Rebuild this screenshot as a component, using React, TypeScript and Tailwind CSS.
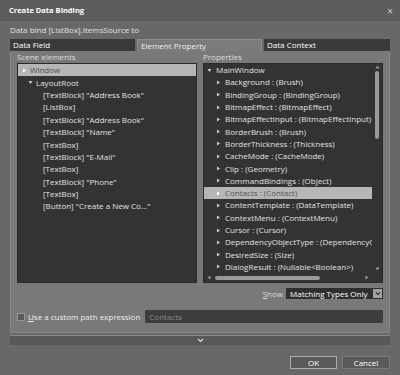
import React from 'react';

const sceneItems = [
  '[TextBlock] "Address Book"',
  '[ListBox]',
  '[TextBlock] "Address Book"',
  '[TextBlock] "Name"',
  '[TextBox]',
  '[TextBlock] "E-Mail"',
  '[TextBox]',
  '[TextBlock] "Phone"',
  '[TextBox]',
  '[Button] "Create a New Co..."',
];

const properties = [
  'Background : (Brush)',
  'BindingGroup : (BindingGroup)',
  'BitmapEffect : (BitmapEffect)',
  'BitmapEffectInput : (BitmapEffectInput)',
  'BorderBrush : (Brush)',
  'BorderThickness : (Thickness)',
  'CacheMode : (CacheMode)',
  'Clip : (Geometry)',
  'CommandBindings : (Object)',
  'Contacts : (Contact)',
  'ContentTemplate : (DataTemplate)',
  'ContextMenu : (ContextMenu)',
  'Cursor : (Cursor)',
  'DependencyObjectType : (DependencyObject',
  'DesiredSize : (Size)',
  'DialogResult : (Nullable<Boolean>)',
];

function Arrow({ down = false, className = '' }: { down?: boolean; className?: string }) {
  return (
    <svg width="5" height="5" viewBox="0 0 5 5" className={`shrink-0 ${className}`}>
      {down ? <path d="M0.5 1 L4.5 1 L2.5 4 Z" fill="currentColor" /> : <path d="M1 0.5 L4 2.5 L1 4.5 Z" fill="currentColor" />}
    </svg>
  );
}

export default function App() {
  return (
    <div
      className="w-[400px] h-[375px] bg-[#686868] text-[8px] text-[#e2e2e2] flex flex-col overflow-hidden"
      style={{ fontFamily: '"Open Sans", "Noto Sans", sans-serif' }}
    >
      {/* title bar */}
      <div className="h-[21px] bg-[#5d5d5d] flex items-center justify-between pl-[9px] pr-[7px]">
        <span className="font-bold text-[7.5px] text-white">Create Data Binding</span>
        <span className="text-[10px] text-[#d0d0d0] leading-none">×</span>
      </div>

      <div className="px-[10px] flex flex-col">
        <div className="h-[14px] mt-[2px] flex items-center">Data bind [ListBox].ItemsSource to</div>

        {/* tabs */}
        <div className="mt-[2px] h-[12px] flex gap-[2px]">
          <div className="w-[125px] bg-[#3a3a3a] flex items-center pl-[3px] text-white">Data Field</div>
          <div className="w-[125px] bg-[#7b7b7b] border border-[#8c8c8c] border-b-0 flex items-center pl-[3px] text-[#eee]">Element Property</div>
          <div className="flex-1 bg-[#3a3a3a] flex items-center pl-[3px] text-white">Data Context</div>
        </div>

        {/* panel */}
        <div className="h-[282px] bg-[#797979] border border-[#888] border-t-0 flex flex-col px-[6px]">
          <div className="flex gap-[6px]">
            {/* scene elements */}
            <div className="w-[180px] flex flex-col">
              <div className="h-[12px] flex items-center text-[#ddd]">Scene elements</div>
              <div className="h-[220px] bg-[#333333] border border-[#2a2a2a] flex flex-col">
                <div className="h-[12.4px] bg-[#b6b6b6] flex items-center pl-[4px] gap-[3px] text-[#4a4a4a]">
                  <Arrow className="text-white" />
                  <span>Window</span>
                </div>
                <div className="h-[12.4px] flex items-center pl-[10px] gap-[3px]">
                  <Arrow down className="text-[#ccc]" />
                  <span>LayoutRoot</span>
                </div>
                {sceneItems.map((s, i) => (
                  <div key={i} className="h-[12.4px] flex items-center pl-[25px] whitespace-nowrap">
                    {s}
                  </div>
                ))}
              </div>
            </div>

            {/* properties */}
            <div className="w-[180px] flex flex-col">
              <div className="h-[12px] flex items-center text-[#ddd]">Properties</div>
              <div className="h-[220px] bg-[#333333] border border-[#2a2a2a] flex flex-col">
                <div className="flex-1 flex overflow-hidden">
                  <div className="flex-1 flex flex-col overflow-hidden">
                    <div className="h-[12.4px] flex items-center pl-[3px] gap-[4px]">
                      <Arrow down className="text-[#ccc]" />
                      <span>MainWindow</span>
                    </div>
                    {properties.map((p, i) => (
                      <div
                        key={i}
                        className={`h-[12.4px] flex items-center pl-[12px] gap-[4px] whitespace-nowrap ${
                          p.startsWith('Contacts') ? 'bg-[#b6b6b6] text-[#555]' : ''
                        }`}
                      >
                        <Arrow className={p.startsWith('Contacts') ? 'text-white' : 'text-[#ccc]'} />
                        <span>{p}</span>
                      </div>
                    ))}
                  </div>
                  {/* vertical scrollbar */}
                  <div className="w-[10px] shrink-0 flex flex-col items-center py-[1px]">
                    <svg width="5" height="4" viewBox="0 0 5 4"><path d="M0.5 3.5 L4.5 3.5 L2.5 0.5 Z" fill="#999" /></svg>
                    <div className="mt-[2px] w-[4px] h-[68px] rounded-full bg-[#9a9a9a]" />
                    <div className="flex-1" />
                    <svg width="5" height="4" viewBox="0 0 5 4" className="mb-[1px]"><path d="M0.5 0.5 L4.5 0.5 L2.5 3.5 Z" fill="#999" /></svg>
                  </div>
                </div>
                {/* horizontal scrollbar */}
                <div className="h-[9px] flex items-center px-[3px] gap-[4px]">
                  <svg width="4" height="5" viewBox="0 0 4 5"><path d="M3.5 0.5 L3.5 4.5 L0.5 2.5 Z" fill="#999" /></svg>
                  <div className="w-[105px] h-[4px] rounded-full bg-[#9a9a9a]" />
                  <div className="flex-1" />
                  <svg width="4" height="5" viewBox="0 0 4 5" className="mr-[10px]"><path d="M0.5 0.5 L0.5 4.5 L3.5 2.5 Z" fill="#999" /></svg>
                </div>
              </div>
            </div>
          </div>

          {/* show row */}
          <div className="mt-[5px] h-[11px] flex items-center justify-end gap-[3px]">
            <span className="text-[#ddd]"><span className="underline">S</span>how</span>
            <div className="w-[97px] h-[11px] bg-[#2f2f2f] flex items-center pl-[4px] text-white">
              <span className="flex-1">Matching Types Only</span>
              <div className="w-[9px] h-[9px] mr-[1px] bg-[#a0a0a0] flex items-center justify-center">
                <svg width="6" height="5" viewBox="0 0 6 5"><path d="M1 1.5 L3 3.5 L5 1.5" stroke="#333" strokeWidth="1.2" fill="none" /></svg>
              </div>
            </div>
          </div>

          {/* custom path row */}
          <div className="mt-[11px] h-[13px] flex items-center">
            <div className="w-[8px] h-[8px] border border-[#999] bg-[#5a5a5a]" />
            <span className="ml-[3px] text-[#eee]"><span className="underline">U</span>se a custom path expression</span>
            <div className="ml-[5px] flex-1 h-[13px] bg-[#3d3d3d] rounded-[1px] flex items-center pl-[4px] text-[#8a8a8a]">Contacts</div>
          </div>
        </div>

        {/* expander bar */}
        <div className="mt-[2px] h-[10px] bg-[#585858] border-t border-[#8a8a8a] flex items-center justify-center">
          <svg width="7" height="5" viewBox="0 0 7 5"><path d="M1 1 L3.5 3.5 L6 1" stroke="#ddd" strokeWidth="1.2" fill="none" /></svg>
        </div>

        {/* buttons */}
        <div className="mt-[11px] flex justify-end gap-[5px]">
          <div className="w-[47px] h-[13px] bg-[#5a5a5a] border border-[#9fb0bd] flex items-center justify-center text-white">OK</div>
          <div className="w-[48px] h-[13px] bg-[#5a5a5a] border border-[#7a7a7a] flex items-center justify-center text-white">Cancel</div>
        </div>
      </div>
    </div>
  );
}
